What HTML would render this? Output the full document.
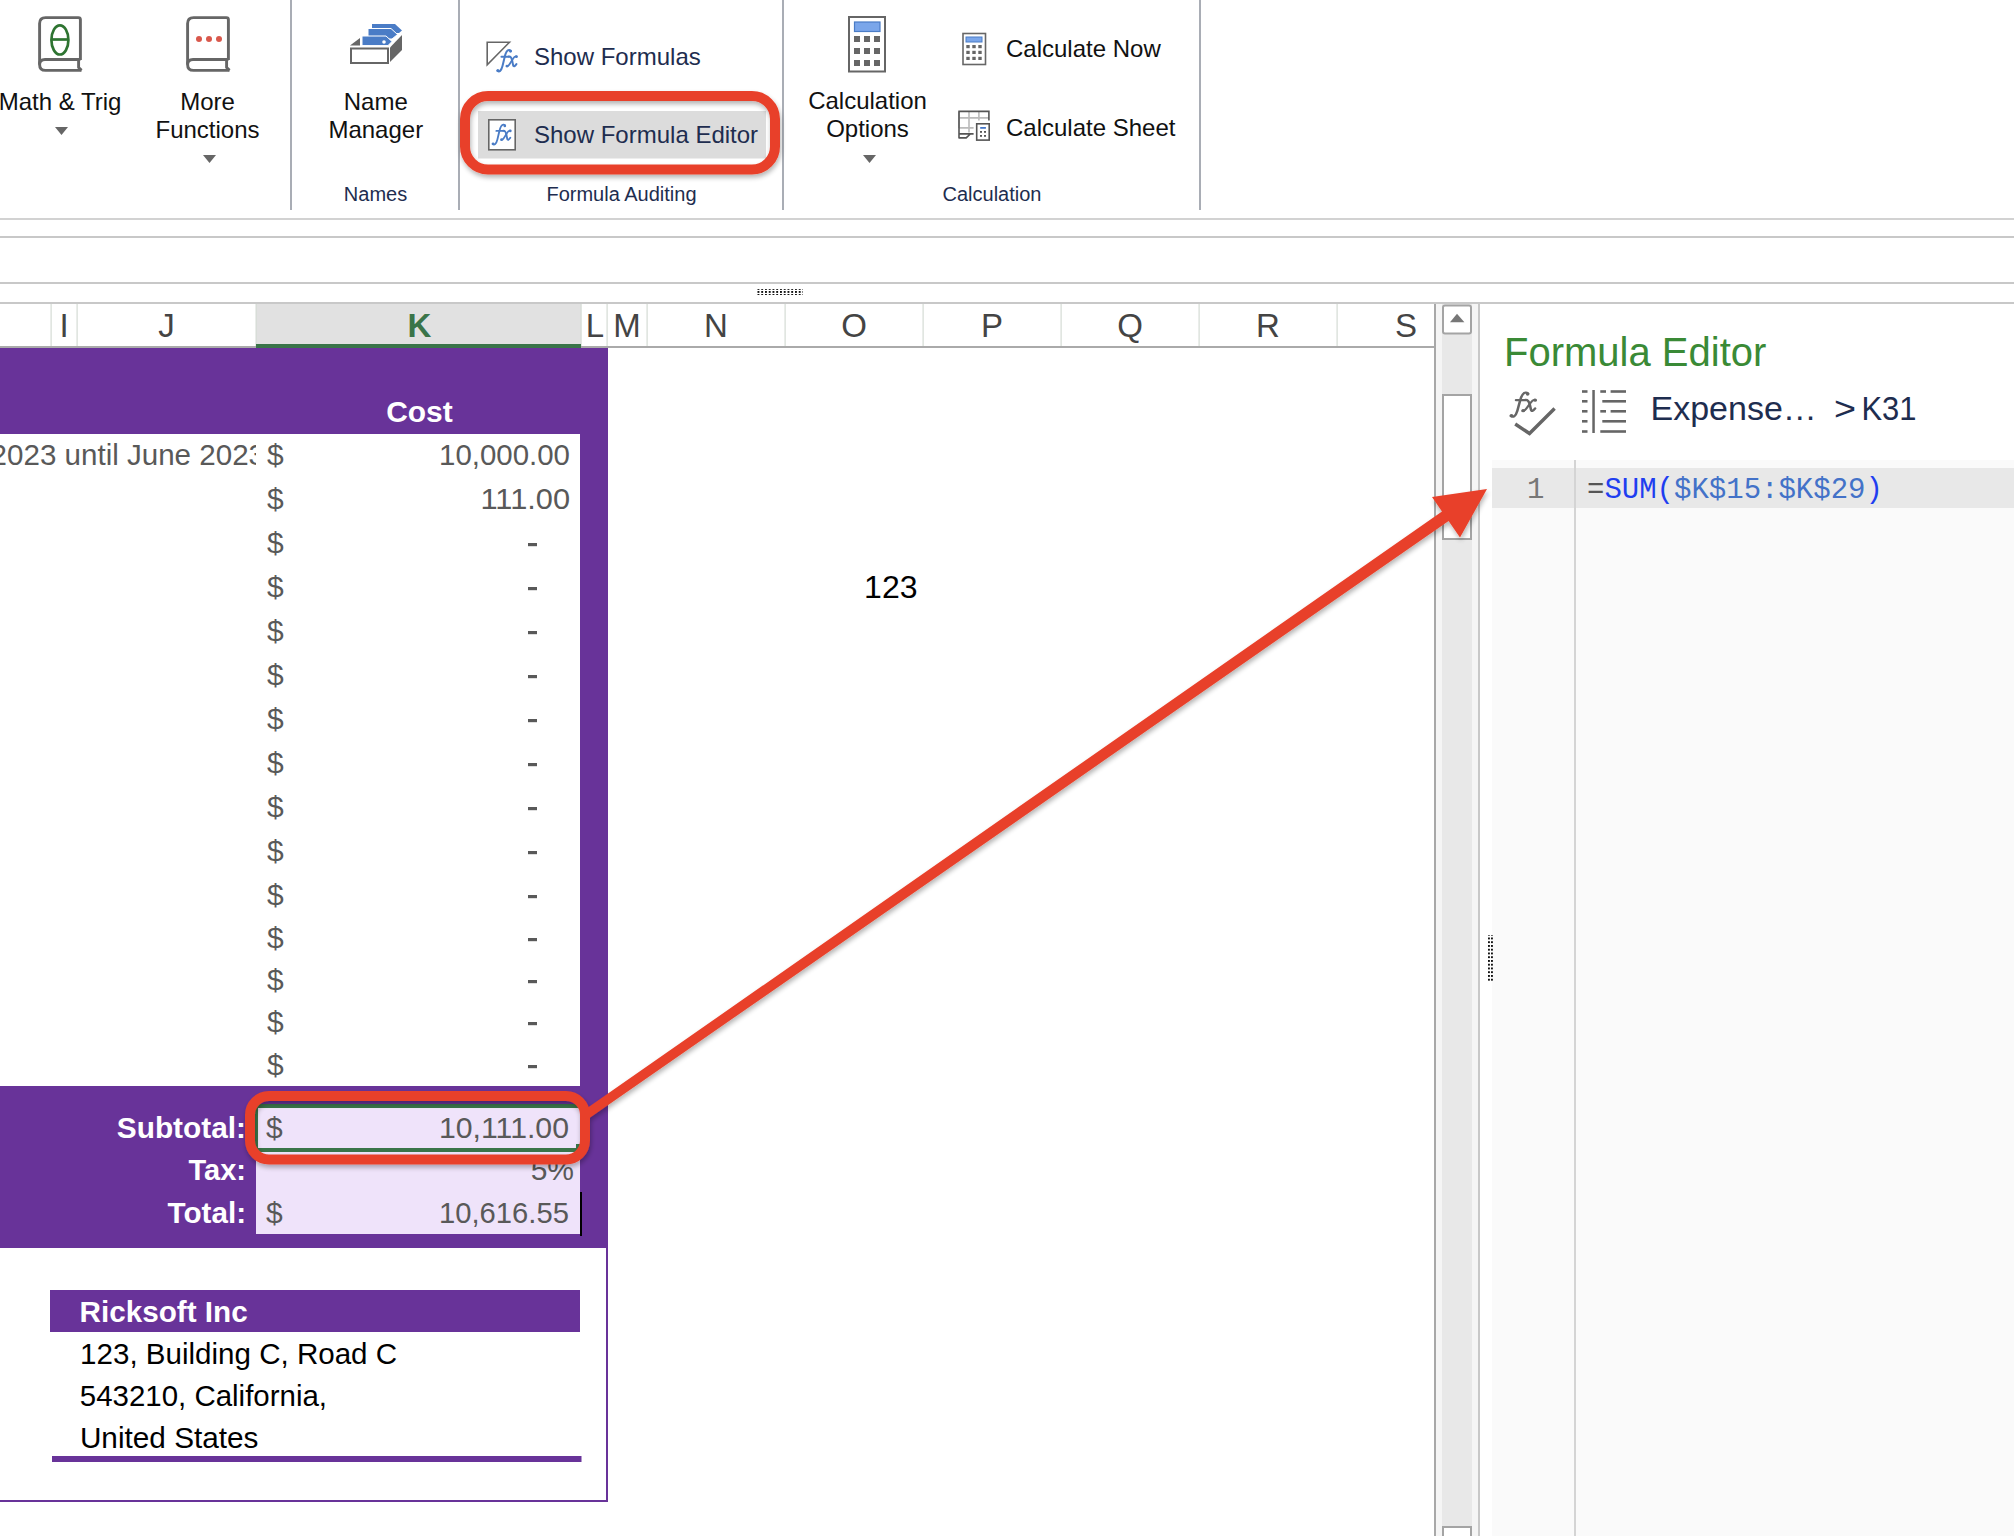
<!DOCTYPE html>
<html><head><meta charset="utf-8">
<style>
html,body{margin:0;padding:0;background:#fff;}
body{width:2014px;height:1536px;overflow:hidden;position:relative;}
svg{position:absolute;left:0;top:0;display:block;}
text{font-family:"Liberation Sans",sans-serif;}
.mono{font-family:"Liberation Mono",monospace;}
.serif{font-family:"Liberation Serif",serif;}
</style></head>
<body>
<svg width="2014" height="1536" viewBox="0 0 2014 1536">
<defs>

  <filter id="sh" x="-20%" y="-20%" width="140%" height="160%">
    <feGaussianBlur in="SourceAlpha" stdDeviation="2.5"/>
    <feOffset dx="1" dy="3" result="b"/>
    <feComponentTransfer><feFuncA type="linear" slope="0.3"/></feComponentTransfer>
    <feMerge><feMergeNode/><feMergeNode in="SourceGraphic"/></feMerge>
  </filter>
  <pattern id="dotsv" x="0" y="0" width="3" height="3.75" patternUnits="userSpaceOnUse">
    <rect x="0" y="0" width="1.9" height="1.9" fill="#111"/>
  </pattern>
  <pattern id="dots" x="0" y="0" width="3.75" height="3" patternUnits="userSpaceOnUse">
    <rect x="0" y="0" width="1.9" height="1.9" fill="#111"/>
  </pattern>
</defs>

<!-- ============ RIBBON ============ -->
<rect x="0" y="0" width="2014" height="219" fill="#fff"/>
<!-- separators -->
<rect x="290" y="0" width="2" height="210" fill="#a9adb5"/>
<rect x="458" y="0" width="2" height="210" fill="#a9adb5"/>
<rect x="782" y="0" width="2" height="210" fill="#a9adb5"/>
<rect x="1199" y="0" width="2" height="210" fill="#a9adb5"/>

<!-- Math & Trig book -->
<g fill="none" stroke="#666" stroke-width="2.9" stroke-linejoin="round">
  <path d="M80.4 60 V19.5 Q80.4 17.6 78.4 17.6 H45.6 Q39.6 17.6 39.6 23.6 V64.4 Q39.6 70.4 45.6 70.4 H81.5"/>
  <path d="M39.6 64.5 Q39.6 59.5 45 59.5 H80.4"/>
  <path d="M78.6 60 V67.5 L81.5 70.4"/>
</g>
<ellipse cx="59.9" cy="39.9" rx="8.5" ry="14.6" fill="none" stroke="#2e7431" stroke-width="2.7"/>
<line x1="51.5" y1="39.5" x2="68.3" y2="39.5" stroke="#2e7431" stroke-width="2.7"/>
<!-- More functions book -->
<g transform="translate(148,0)" fill="none" stroke="#666" stroke-width="2.9" stroke-linejoin="round">
  <path d="M80.4 60 V19.5 Q80.4 17.6 78.4 17.6 H45.6 Q39.6 17.6 39.6 23.6 V64.4 Q39.6 70.4 45.6 70.4 H81.5"/>
  <path d="M39.6 64.5 Q39.6 59.5 45 59.5 H80.4"/>
  <path d="M78.6 60 V67.5 L81.5 70.4"/>
</g>
<circle cx="199" cy="39" r="3" fill="#d9584c"/>
<circle cx="209" cy="39" r="3" fill="#d9584c"/>
<circle cx="219" cy="39" r="3" fill="#d9584c"/>

<text x="60" y="110" font-size="24" text-anchor="middle" fill="#111">Math &amp; Trig</text>
<path d="M55 127 H68 L61.5 135 Z" fill="#666"/>
<text x="207.5" y="110" font-size="24" text-anchor="middle" fill="#111">More</text>
<text x="207.5" y="138" font-size="24" text-anchor="middle" fill="#111">Functions</text>
<path d="M203 155 H216 L209.5 163 Z" fill="#666"/>

<!-- Name Manager icon -->
<g>
  <path d="M350 45.6 L360 38 V45.6 Z" fill="#666"/>
  <path d="M372 24 H395 L402 30.5 L399 33 H372 Z" fill="#4a7cc6"/>
  <path d="M368 28.5 H391 L397.5 34.5 L392 39 H368 Z" fill="#4a7cc6" stroke="#fff" stroke-width="1"/>
  <path d="M362 36 H386 L392 41.5 L388 45.6 H362 Z" fill="#4a7cc6" stroke="#fff" stroke-width="1"/>
  <circle cx="384" cy="42" r="1.8" fill="#fff"/>
  <rect x="351" y="48.5" width="37" height="14.5" fill="#fff" stroke="#666" stroke-width="2"/>
  <path d="M390 47.5 L402 35 V50 L390 62 Z" fill="#666"/>
</g>
<text x="375.8" y="110" font-size="24" text-anchor="middle" fill="#111">Name</text>
<text x="375.8" y="138" font-size="24" text-anchor="middle" fill="#111">Manager</text>
<text x="375.5" y="201" font-size="20" text-anchor="middle" fill="#1e2d4f">Names</text>

<!-- Show Formulas -->
<path d="M487.2 42.2 H509.5 L487.2 64.8 Z" fill="none" stroke="#666" stroke-width="1.6"/>
<g fill="none" stroke-linecap="round" stroke-linejoin="round" transform="translate(496.2,49.6)" stroke="#4a7cc6" color="#4a7cc6">
    <path d="M1.3 21.2 C3 22.6 5 21.6 6.3 16.5 L8.3 8.1 C9.3 3.5 11 0.2 13 0.4 C14 0.5 14.6 1 14.7 1.3" stroke-width="2"/>
    <circle cx="1.7" cy="21" r="1.5" stroke="none" fill="currentColor"/>
    <circle cx="14.3" cy="1.7" r="1.4" stroke="none" fill="currentColor"/>
    <path d="M5.2 7.1 H12.8" stroke-width="1.9"/>
    <path d="M12.6 6.8 C14.6 6.6 15.4 8 16 11 L16.9 15.5 C17.3 17.5 18.5 17 20.2 14.5" stroke-width="2"/>
    <path d="M20.4 7 C19 6.2 17.8 7.5 16.5 9.6 L13.5 14.4 C12.5 16 11.6 17 10.4 16.6" stroke-width="1.8"/>
    <circle cx="20.2" cy="7.1" r="1.4" stroke="none" fill="currentColor"/>
    <circle cx="10.8" cy="16.5" r="1.4" stroke="none" fill="currentColor"/>
  </g>
<text x="534" y="65.2" font-size="24" fill="#1e2d4f">Show Formulas</text>

<!-- highlighted Show Formula Editor -->
<rect x="478" y="111" width="288" height="47.5" fill="#dcdcdc"/>
<rect x="488.8" y="119.8" width="26.4" height="30" fill="#fff" stroke="#666" stroke-width="1.6"/>
<g fill="none" stroke-linecap="round" stroke-linejoin="round" transform="translate(491.5,124.3) scale(0.93)" stroke="#4a7cc6" color="#4a7cc6">
    <path d="M1.3 21.2 C3 22.6 5 21.6 6.3 16.5 L8.3 8.1 C9.3 3.5 11 0.2 13 0.4 C14 0.5 14.6 1 14.7 1.3" stroke-width="2"/>
    <circle cx="1.7" cy="21" r="1.5" stroke="none" fill="currentColor"/>
    <circle cx="14.3" cy="1.7" r="1.4" stroke="none" fill="currentColor"/>
    <path d="M5.2 7.1 H12.8" stroke-width="1.9"/>
    <path d="M12.6 6.8 C14.6 6.6 15.4 8 16 11 L16.9 15.5 C17.3 17.5 18.5 17 20.2 14.5" stroke-width="2"/>
    <path d="M20.4 7 C19 6.2 17.8 7.5 16.5 9.6 L13.5 14.4 C12.5 16 11.6 17 10.4 16.6" stroke-width="1.8"/>
    <circle cx="20.2" cy="7.1" r="1.4" stroke="none" fill="currentColor"/>
    <circle cx="10.8" cy="16.5" r="1.4" stroke="none" fill="currentColor"/>
  </g>
<text x="534" y="143.4" font-size="24" fill="#1e2d4f">Show Formula Editor</text>
<text x="621.5" y="200.7" font-size="20" text-anchor="middle" fill="#1e2d4f">Formula Auditing</text>

<!-- Calculation Options icon -->
<g>
  <rect x="849" y="17" width="36" height="54.5" fill="#fff" stroke="#666" stroke-width="2"/>
  <rect x="854.5" y="22" width="25.5" height="9.5" fill="#7aa6ea" stroke="#4a7cc6" stroke-width="1.2"/>
  <g fill="#666">
    <rect x="854" y="36" width="6" height="6"/><rect x="864" y="36" width="6" height="6"/><rect x="874" y="36" width="6" height="6"/>
    <rect x="854" y="48" width="6" height="6"/><rect x="864" y="48" width="6" height="6"/><rect x="874" y="48" width="6" height="6"/>
    <rect x="854" y="60" width="6" height="6"/><rect x="864" y="60" width="6" height="6"/><rect x="874" y="60" width="6" height="6"/>
  </g>
</g>
<text x="867.5" y="109" font-size="24" text-anchor="middle" fill="#111">Calculation</text>
<text x="867.5" y="137" font-size="24" text-anchor="middle" fill="#111">Options</text>
<path d="M863 155 H876 L869.5 163 Z" fill="#666"/>

<!-- Calculate Now icon -->
<g>
  <rect x="963" y="33.5" width="22.5" height="31" fill="#fff" stroke="#666" stroke-width="1.6"/>
  <rect x="966" y="37" width="16" height="5" fill="#7aa6ea" stroke="#4a7cc6" stroke-width="1"/>
  <g fill="#666">
    <rect x="966.3" y="45" width="3.4" height="3.2"/><rect x="972.3" y="45" width="3.4" height="3.2"/><rect x="978.3" y="45" width="3.4" height="3.2"/>
    <rect x="966.3" y="50.8" width="3.4" height="3.2"/><rect x="972.3" y="50.8" width="3.4" height="3.2"/><rect x="978.3" y="50.8" width="3.4" height="3.2"/>
    <rect x="966.3" y="56.8" width="3.4" height="3.2"/><rect x="972.3" y="56.8" width="3.4" height="3.2"/><rect x="978.3" y="56.8" width="3.4" height="3.2"/>
  </g>
</g>
<text x="1006" y="57.2" font-size="24" fill="#111">Calculate Now</text>

<!-- Calculate Sheet icon -->
<g>
  <path d="M959 112 V127.9 M959 117.9 H989 M969 112 V132.4 M978.9 112 V120.4 M959 127.9 H973.6" fill="none" stroke="#bbb" stroke-width="1.6"/>
  <path d="M958.3 111.4 H989.7 M959 111 V138.6 M988.9 111 V120.4 M959 133.9 H973.6 M959 137.9 H966.2 L970 134.2" fill="none" stroke="#555" stroke-width="1.6"/>
  <rect x="976.7" y="123.8" width="12.5" height="16.3" fill="#fff" stroke="#555" stroke-width="1.6"/>
  <path d="M980.2 127.9 H985.9" stroke="#2f67c2" stroke-width="1.6"/>
  <g fill="#444">
    <rect x="980.1" y="131" width="1.8" height="1.8"/><rect x="984.1" y="131" width="1.8" height="1.8"/>
    <rect x="980.1" y="135" width="1.8" height="1.8"/><rect x="984.1" y="135" width="1.8" height="1.8"/>
  </g>
</g>
<text x="1006" y="135.5" font-size="24" fill="#111">Calculate Sheet</text>
<text x="992" y="201" font-size="20" text-anchor="middle" fill="#1e2d4f">Calculation</text>

<!-- horizontal bars -->
<rect x="0" y="218" width="2014" height="2" fill="#d2d2d2"/>
<rect x="0" y="236" width="2014" height="2" fill="#c8c8c8"/>
<rect x="0" y="282" width="2014" height="2" fill="#c8c8c8"/>
<rect x="757" y="289" width="46" height="6" fill="url(#dots)"/>
<rect x="0" y="302" width="2014" height="2" fill="#c8c8c8"/>


<!-- ============ SHEET ============ -->
<!-- column header -->
<rect x="256" y="304" width="325" height="40" fill="#e1e1e1"/>
<g fill="#d5dcd5">
  <rect x="50.5" y="304" width="1.2" height="43"/>
  <rect x="76.5" y="304" width="1.2" height="43"/>
  <rect x="255.5" y="304" width="1.2" height="43"/>
  <rect x="580.5" y="304" width="1.2" height="43"/>
  <rect x="606.5" y="304" width="1.2" height="43"/>
  <rect x="646.5" y="304" width="1.2" height="43"/>
  <rect x="784.5" y="304" width="1.2" height="43"/>
  <rect x="922.5" y="304" width="1.2" height="43"/>
  <rect x="1060.5" y="304" width="1.2" height="43"/>
  <rect x="1198.5" y="304" width="1.2" height="43"/>
  <rect x="1336.5" y="304" width="1.2" height="43"/>
</g>
<rect x="0" y="346" width="1434" height="2" fill="#aaaaaa"/>
<rect x="256" y="344" width="325" height="4" fill="#3a7449"/>
<g font-size="33" fill="#444" text-anchor="middle">
  <text x="64" y="337">I</text>
  <text x="166.5" y="337">J</text>
  <text x="419.5" y="337" font-weight="bold" fill="#3a7449">K</text>
  <text x="595" y="337">L</text>
  <text x="627" y="337">M</text>
  <text x="716" y="337">N</text>
  <text x="854" y="337">O</text>
  <text x="992" y="337">P</text>
  <text x="1130" y="337">Q</text>
  <text x="1268" y="337">R</text>
  <text x="1406" y="337">S</text>
</g>

<!-- purple block -->
<rect x="0" y="348" width="608" height="900" fill="#683399"/>
<rect x="0" y="434" width="580" height="652" fill="#fff"/>
<text x="419.4" y="422" font-size="29.5" font-weight="bold" fill="#fff" text-anchor="middle" textLength="66.5" lengthAdjust="spacingAndGlyphs">Cost</text>

<svg x="0" y="434" width="256" height="44" overflow="hidden">
  <text x="-9.4" y="31" font-size="30" fill="#595959" textLength="274.4" lengthAdjust="spacingAndGlyphs">2023 until June 2023</text>
</svg>
<g font-size="30" fill="#595959">
  <text x="267" y="465">$</text><text x="570" y="465" text-anchor="end" textLength="131" lengthAdjust="spacingAndGlyphs">10,000.00</text>
  <text x="267" y="509">$</text><text x="570" y="509" text-anchor="end" textLength="89.5" lengthAdjust="spacingAndGlyphs">111.00</text>
  <text x="267" y="553">$</text><rect x="528" y="543" width="9" height="3.2"/>
  <text x="267" y="597">$</text><rect x="528" y="587" width="9" height="3.2"/>
  <text x="267" y="641">$</text><rect x="528" y="631" width="9" height="3.2"/>
  <text x="267" y="685">$</text><rect x="528" y="675" width="9" height="3.2"/>
  <text x="267" y="729">$</text><rect x="528" y="719" width="9" height="3.2"/>
  <text x="267" y="773">$</text><rect x="528" y="763" width="9" height="3.2"/>
  <text x="267" y="817">$</text><rect x="528" y="807" width="9" height="3.2"/>
  <text x="267" y="861">$</text><rect x="528" y="851" width="9" height="3.2"/>
  <text x="267" y="905">$</text><rect x="528" y="895" width="9" height="3.2"/>
  <text x="267" y="948">$</text><rect x="528" y="938" width="9" height="3.2"/>
  <text x="267" y="990">$</text><rect x="528" y="980" width="9" height="3.2"/>
  <text x="267" y="1032">$</text><rect x="528" y="1022" width="9" height="3.2"/>
  <text x="267" y="1075">$</text><rect x="528" y="1065" width="9" height="3.2"/>
</g>

<!-- totals -->
<rect x="256" y="1104" width="324" height="130" fill="#efe3fa"/>
<g font-size="29" font-weight="bold" fill="#fff" text-anchor="end">
  <text x="246" y="1138" textLength="129.2" lengthAdjust="spacingAndGlyphs">Subtotal:</text>
  <text x="246" y="1180">Tax:</text>
  <text x="246" y="1222.5" textLength="78.4" lengthAdjust="spacingAndGlyphs">Total:</text>
</g>
<g font-size="30" fill="#595959">
  <text x="266" y="1138">$</text><text x="569" y="1138" text-anchor="end" textLength="130" lengthAdjust="spacingAndGlyphs">10,111.00</text>
  <text x="574" y="1180" text-anchor="end">5%</text>
  <text x="266" y="1222.5">$</text><text x="569" y="1222.5" text-anchor="end" textLength="130" lengthAdjust="spacingAndGlyphs">10,616.55</text>
</g>
<rect x="255" y="1104" width="326" height="4" fill="#3a7449"/>
<rect x="255" y="1104" width="3" height="48" fill="#3a7449"/>
<rect x="255" y="1148" width="321" height="4" fill="#3a7449"/>
<rect x="576" y="1144" width="4" height="8" fill="#3a7449"/>
<rect x="580" y="1192" width="2" height="44" fill="#000"/>

<!-- bottom of form -->
<rect x="606" y="1248" width="2" height="254" fill="#683399"/>
<rect x="0" y="1500" width="608" height="2" fill="#683399"/>
<rect x="50" y="1290" width="530" height="42" fill="#683399"/>
<text x="79.6" y="1322" font-size="29" font-weight="bold" fill="#fff" textLength="168.1" lengthAdjust="spacingAndGlyphs">Ricksoft Inc</text>
<g font-size="30" fill="#000">
  <text x="80.1" y="1364" textLength="317" lengthAdjust="spacingAndGlyphs">123, Building C, Road C</text>
  <text x="79.8" y="1406" textLength="247.2" lengthAdjust="spacingAndGlyphs">543210, California,</text>
  <text x="79.9" y="1448" textLength="178.6" lengthAdjust="spacingAndGlyphs">United States</text>
</g>
<rect x="52" y="1456" width="529.5" height="6" fill="#683399"/>

<text x="917.5" y="598" font-size="32" fill="#000" text-anchor="end">123</text>

<!-- ============ SCROLLBAR ============ -->
<rect x="1434" y="304" width="46" height="1232" fill="#f5f5f5"/>
<rect x="1434" y="304" width="2" height="1232" fill="#a8a8a8"/>
<rect x="1478" y="304" width="2" height="1232" fill="#c8c8c8"/>
<rect x="1442" y="304" width="30" height="1232" fill="#e8e8e8"/>
<rect x="1443" y="305.5" width="28" height="28" rx="2" fill="#fff" stroke="#a4a4a4" stroke-width="2"/>
<path d="M1450 322.3 L1457 313.8 L1464.4 322.3 Z" fill="#777"/>
<rect x="1443" y="395" width="28" height="144" fill="#fff" stroke="#a4a4a4" stroke-width="2"/>
<rect x="1443" y="1527" width="28" height="20" fill="#fff" stroke="#a4a4a4" stroke-width="2"/>

<!-- ============ FORMULA EDITOR ============ -->
<rect x="1480" y="304" width="534" height="1232" fill="#fff"/>
<text x="1504" y="366" font-size="40" fill="#3a8a36">Formula Editor</text>
<!-- fx check icon -->
<g fill="none" stroke-linecap="round" stroke-linejoin="round" transform="translate(1509.3,392.2) scale(1.28,1.12)" stroke="#666" color="#666">
    <path d="M1.3 21.2 C3 22.6 5 21.6 6.3 16.5 L8.3 8.1 C9.3 3.5 11 0.2 13 0.4 C14 0.5 14.6 1 14.7 1.3" stroke-width="2"/>
    <circle cx="1.7" cy="21" r="1.5" stroke="none" fill="currentColor"/>
    <circle cx="14.3" cy="1.7" r="1.4" stroke="none" fill="currentColor"/>
    <path d="M5.2 7.1 H12.8" stroke-width="1.9"/>
    <path d="M12.6 6.8 C14.6 6.6 15.4 8 16 11 L16.9 15.5 C17.3 17.5 18.5 17 20.2 14.5" stroke-width="2"/>
    <path d="M20.4 7 C19 6.2 17.8 7.5 16.5 9.6 L13.5 14.4 C12.5 16 11.6 17 10.4 16.6" stroke-width="1.8"/>
    <circle cx="20.2" cy="7.1" r="1.4" stroke="none" fill="currentColor"/>
    <circle cx="10.8" cy="16.5" r="1.4" stroke="none" fill="currentColor"/>
  </g>
<path d="M1515.2 424 L1529.5 433.5 L1554.6 408.5" fill="none" stroke="#666" stroke-width="3.4"/>
<!-- list icon -->
<g fill="#666">
  <rect x="1582" y="390.2" width="5.5" height="2.6"/>
  <rect x="1582" y="400" width="5.5" height="2.6"/>
  <rect x="1582" y="410" width="5.5" height="2.6"/>
  <rect x="1582" y="420" width="5.5" height="2.6"/>
  <rect x="1582" y="430.2" width="5.5" height="2.6"/>
  <rect x="1592.3" y="390" width="2.5" height="43"/>
  <rect x="1600.3" y="390.2" width="5.7" height="2.6"/><rect x="1610.6" y="390.2" width="15.4" height="2.6"/>
  <rect x="1602.3" y="400" width="23.7" height="2.6"/>
  <rect x="1600.3" y="410" width="5.7" height="2.6"/><rect x="1610.6" y="410" width="15.4" height="2.6"/>
  <rect x="1602.3" y="420" width="23.7" height="2.6"/>
  <rect x="1600.3" y="430.2" width="25.7" height="2.6"/>
</g>
<text x="1650.5" y="419.5" font-size="34" fill="#1e2d4f">Expense…</text><text x="1834" y="419.5" font-size="34" fill="#1e2d4f" textLength="22" lengthAdjust="spacingAndGlyphs">&gt;</text><text x="1861.5" y="419.5" font-size="34" fill="#1e2d4f" textLength="55" lengthAdjust="spacingAndGlyphs">K31</text>

<rect x="1492" y="460" width="522" height="1076" fill="#fafafa"/>
<rect x="1492" y="468" width="522" height="40" fill="#e8e8e8"/>
<rect x="1574" y="460" width="2" height="1076" fill="#d4d4d4"/>
<text x="1544.5" y="498" font-size="29" class="mono" fill="#777" text-anchor="end">1</text>
<text x="1587" y="498" font-size="29" class="mono"><tspan fill="#555">=</tspan><tspan fill="#1f3ef0">SUM(</tspan><tspan fill="#4372c8">$K$15:$K$29</tspan><tspan fill="#1f3ef0">)</tspan></text>
<rect x="1487" y="935" width="6" height="46" fill="url(#dotsv)"/>

<!-- ============ ANNOTATIONS ============ -->
<g filter="url(#sh)">
  <rect x="465" y="96" width="310" height="73.5" rx="23" ry="23" fill="none" stroke="#e8412a" stroke-width="10"/>
  <rect x="250" y="1096" width="335" height="63.5" rx="19" ry="19" fill="none" stroke="#e8412a" stroke-width="10"/>
  <path d="M586.5 1108.6 L1442 511.5 L1432 497 L1487 489 L1460 537.5 L1448.6 521 L584.8 1121.3 Z" fill="#e8412a"/>
</g>
</svg>
</body></html>
